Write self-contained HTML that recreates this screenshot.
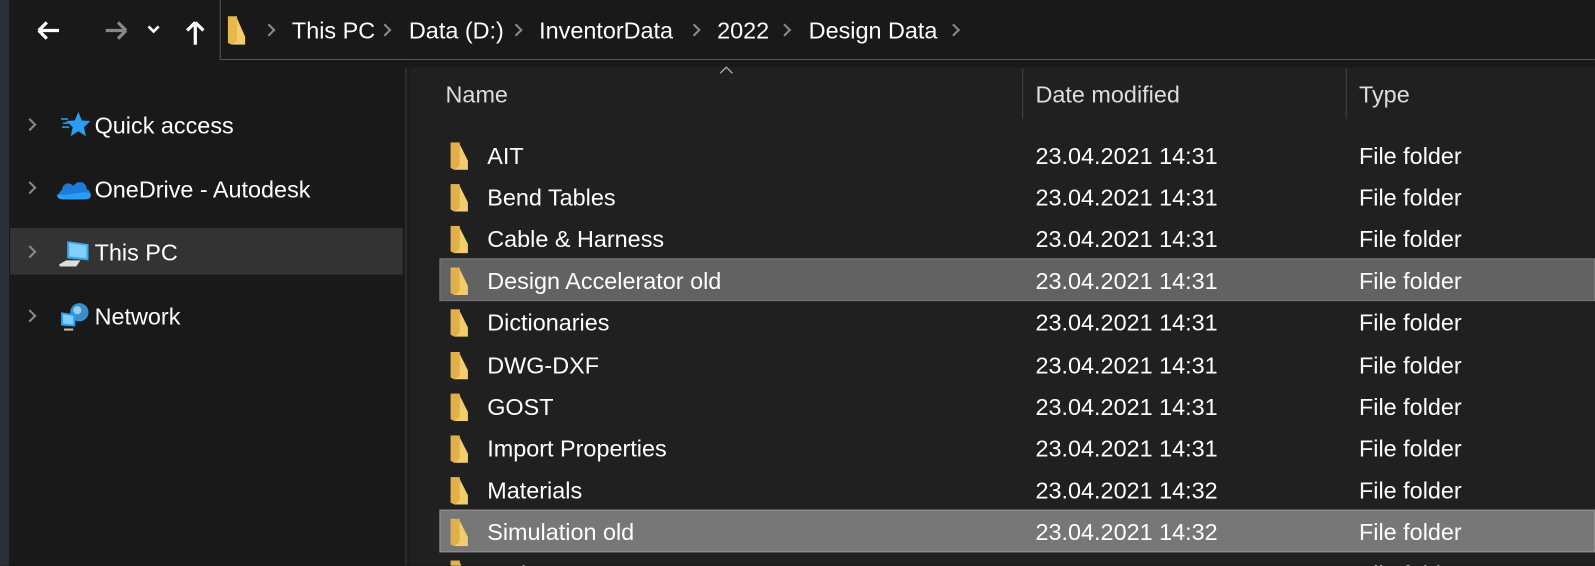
<!DOCTYPE html>
<html style="overflow:hidden;width:1595px;height:566px"><head><meta charset="utf-8"><style>
*{margin:0;padding:0;box-sizing:border-box}
body{width:1595px;height:566px;overflow:hidden;background:#191919;font-family:"Liberation Sans",sans-serif;color:#fff;position:relative}
#w{position:absolute;left:0;top:0;width:1568px;height:556px;overflow:hidden;transform:scale(1.0172);transform-origin:0 0}
.a{position:absolute;white-space:nowrap}
.t{font-size:23px;line-height:30px}
.chev{position:absolute;width:9px;height:9px;border-right:2.5px solid #8a8a8a;border-top:2.5px solid #8a8a8a;transform:rotate(45deg)}
.fold{position:absolute;width:18px;height:27px}
.row{position:absolute;left:432px;width:1136px;height:42px}
</style></head><body><div id="w">
<div class="a" style="left:0;top:0;width:9px;height:566px;background:#2b3038"></div>
<svg class="a" style="left:30px;top:16px" width="180" height="32" viewBox="0 0 180 32">
<path d="M8 14H28M8 14L16 6M8 14L16 22" stroke="#fff" stroke-width="3.2" fill="none"/>
<path d="M94 14H74M94 14L86 6M94 14L86 22" stroke="#888" stroke-width="3.2" fill="none"/>
<path d="M116 10L121 15L126 10" stroke="#fff" stroke-width="2.6" fill="none"/>
<path d="M162 28V6M162 6L154 14M162 6L170 14" stroke="#fff" stroke-width="3.2" fill="none"/>
</svg>
<div class="a" style="left:216px;top:0;width:1360px;height:59px;border:1px solid #555;border-top:none;border-right:none;background:#191919"></div>
<svg class="a" style="left:224px;top:16px" width="20" height="28" viewBox="0 0 20 28"><path d="M0 0H9V2L17 20V28H4L0 26Z" fill="#f3cd6b"/><path d="M0 0H9V24L4 28L0 26Z" fill="#e7b84e"/></svg>
<div class="chev" style="left:260px;top:25px"></div>
<div class="a t" style="left:287px;top:15px">This PC</div>
<div class="chev" style="left:374px;top:25px"></div>
<div class="a t" style="left:402px;top:15px">Data (D:)</div>
<div class="chev" style="left:503px;top:25px"></div>
<div class="a t" style="left:530px;top:15px">InventorData</div>
<div class="chev" style="left:678px;top:25px"></div>
<div class="a t" style="left:705px;top:15px">2022</div>
<div class="chev" style="left:767px;top:25px"></div>
<div class="a t" style="left:795px;top:15px">Design Data</div>
<div class="chev" style="left:933px;top:25px"></div>
<div class="a" style="left:9px;top:60px;width:391px;height:506px;background:#191919"></div>
<div class="a" style="left:398px;top:66px;width:6px;height:500px;background:#1c1c1c;border-left:2px solid #2c2c2c"></div>
<div class="a" style="left:10px;top:224px;width:386px;height:46px;background:#333"></div>
<div class="chev" style="left:25px;top:118px"></div>
<div class="chev" style="left:25px;top:180px"></div>
<div class="chev" style="left:25px;top:243px"></div>
<div class="chev" style="left:25px;top:306px"></div>
<svg class="a" style="left:58px;top:108px" width="32" height="28" viewBox="0 0 32 28"><path d="M19 2L22.5 10.5L31 11L24.5 17L26.5 26L19 21L11.5 26L13.5 17L7 11L15.5 10.5Z" fill="#2a9df4"/><path d="M2 9H9M4 13H9M3 17H10" stroke="#2a9df4" stroke-width="1.5"/></svg>
<svg class="a" style="left:56px;top:175px" width="34" height="22" viewBox="0 0 34 22"><path d="M6 21C1 21 0 14 5 12C5 5 13 3 16 8C20 1 30 4 29 11C34 11 34 21 28 21Z" fill="#1e7bd6"/><path d="M0 16C0 21 4 21 6 21H28C32 21 34 19 33 15C25 12 12 18 0 16Z" fill="#2a9df4"/></svg>
<svg class="a" style="left:57px;top:236px" width="32" height="28" viewBox="0 0 32 28"><path d="M9 1L30 4V20L9 18Z" fill="#3aa6e8"/><path d="M11 3L28 5.5V18L11 16Z" fill="#7fd0ff"/><path d="M1 24L8 20H22L18 26H2Z" fill="#ddd"/></svg>
<svg class="a" style="left:58px;top:297px" width="30" height="30" viewBox="0 0 30 30"><circle cx="20" cy="10" r="9" fill="#3a8fc8"/><circle cx="18" cy="8" r="4" fill="#8fd0f0"/><path d="M2 10L16 12V24L2 23Z" fill="#2a9df4"/><path d="M4 12L14 13.5V22L4 21Z" fill="#7fd0ff"/><path d="M5 27H14" stroke="#bbb" stroke-width="2"/></svg>
<div class="a t" style="left:93px;top:108px">Quick access</div>
<div class="a t" style="left:93px;top:171px">OneDrive - Autodesk</div>
<div class="a t" style="left:93px;top:233px">This PC</div>
<div class="a t" style="left:93px;top:296px">Network</div>
<div class="a" style="left:404px;top:66px;width:1170px;height:500px;background:#202020"></div>
<svg class="a" style="left:706px;top:64px" width="16" height="10"><path d="M2 8L8 2L14 8" stroke="#aaa" stroke-width="1.3" fill="none"/></svg>
<div class="a" style="left:1005px;top:67px;width:1px;height:50px;background:#444"></div>
<div class="a" style="left:1323px;top:67px;width:1px;height:50px;background:#444"></div>
<div class="a t" style="left:438px;top:78px;color:#ddd">Name</div>
<div class="a t" style="left:1018px;top:78px;color:#ddd">Date modified</div>
<div class="a t" style="left:1336px;top:78px;color:#ddd">Type</div>
<div class="row" style="top:254px;background:#626262;border:1px solid #7a7a7a"></div>
<div class="row" style="top:501px;background:#777;border:1px solid #959595"></div>
<div id="rows"></div>
</div>
<script>
var n=[["AIT","14:31"],["Bend Tables","14:31"],["Cable &amp; Harness","14:31"],["Design Accelerator old","14:31"],["Dictionaries","14:31"],["DWG-DXF","14:31"],["GOST","14:31"],["Import Properties","14:31"],["Materials","14:32"],["Simulation old","14:32"],["Styles","14:32"]];
var h="";n.forEach(function(r,i){var c=153+i*41.1;
h+='<svg class="fold" style="left:443px;top:'+(c-13)+'px" viewBox="0 0 18 27"><path d="M0 0H8L17 18V27H4L0 25Z" fill="#f3cd6b"/><path d="M0 0H9V23L4 27L0 25Z" fill="#e2b04a"/></svg>';
h+='<div class="a t" style="left:479px;top:'+(c-15)+'px">'+r[0]+'</div>';
h+='<div class="a t" style="left:1018px;top:'+(c-15)+'px">23.04.2021 '+r[1]+'</div>';
h+='<div class="a t" style="left:1336px;top:'+(c-15)+'px">File folder</div>';});
document.getElementById("rows").innerHTML=h;
</script>
</body></html>
